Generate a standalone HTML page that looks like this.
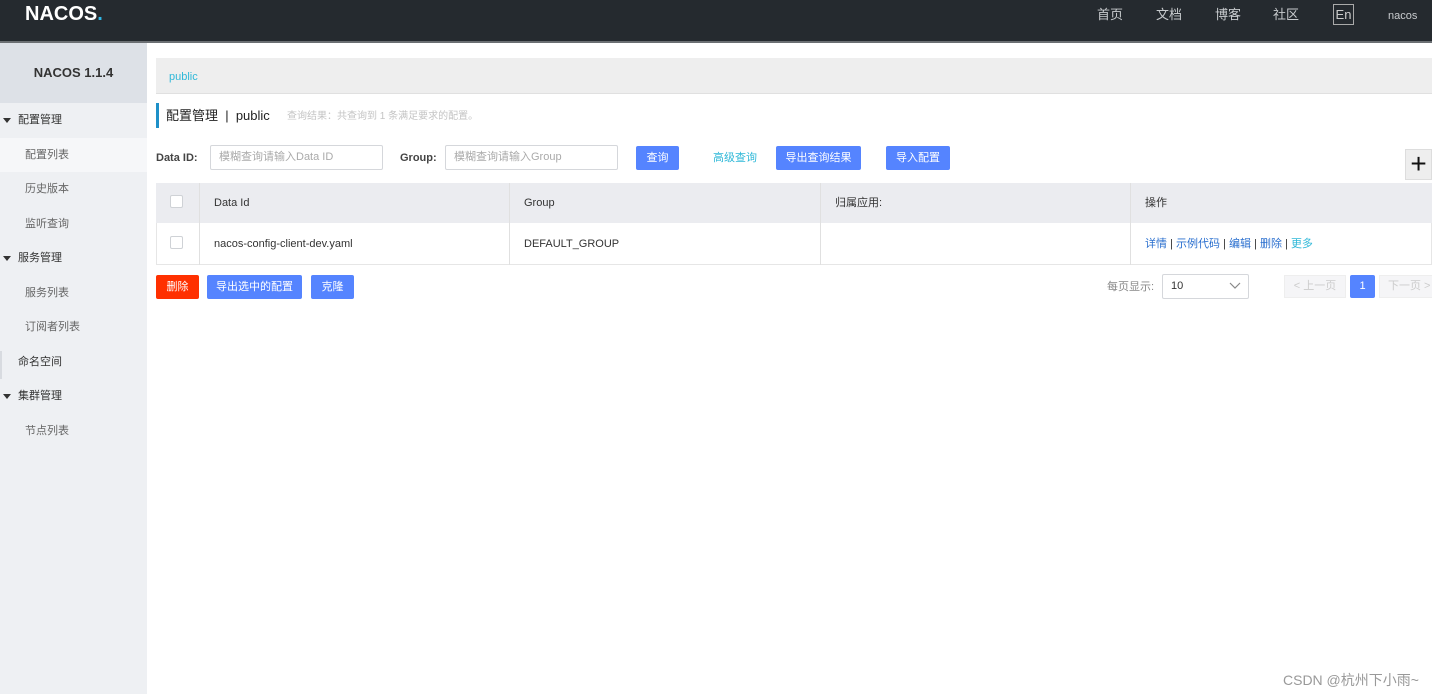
<!DOCTYPE html>
<html><head><meta charset="utf-8"><style>
*{box-sizing:border-box;margin:0;padding:0}
body{width:1432px;height:694px;overflow:hidden;font-family:"Liberation Sans","Noto Sans CJK SC",sans-serif;font-size:12px;color:#333;background:#fff;position:relative;line-height:14px}
.abs{position:absolute}
#hd{left:0;top:0;width:1432px;height:43px;background:#252a2f;border-bottom:2px solid #6b6f73}
#hd .nav{color:#c8cbce;font-size:13px;top:7px;line-height:16px}
#sb{left:0;top:43px;width:147px;height:651px;background:#eef0f3}
.si{position:absolute;left:0;width:147px;height:34px;line-height:34px;font-size:11px;color:#666;padding-left:25px}
.sg{padding-left:18px;color:#333}
.sg:before{content:"";position:absolute;left:3px;top:15px;border:4px solid transparent;border-top:5px solid #333}
.btn{position:absolute;height:24px;line-height:24px;color:#fff;background:#5584ff;border-radius:2px;font-size:11px;text-align:center}
.inp{position:absolute;height:25px;border:1px solid #d5d7db;border-radius:2px;font-size:11px;color:#aaa;line-height:23px;padding-left:8px}
.cell{position:absolute;font-size:11px;color:#333;line-height:14px;height:14px}
.cb{position:absolute;width:13px;height:13px;border:1px solid #cfd2d6;border-radius:2px;background:#fff}
</style></head><body>
<div id="hd" class="abs">
 <div class="abs" style="left:25px;top:3px;color:#fff;font-size:20px;line-height:22px;font-weight:bold">NACOS<span style="color:#2fb8e8">.</span></div>
 <div class="abs nav" style="left:1097px">首页</div>
 <div class="abs nav" style="left:1156px">文档</div>
 <div class="abs nav" style="left:1215px">博客</div>
 <div class="abs nav" style="left:1273px">社区</div>
 <div class="abs" style="left:1333px;top:4px;width:21px;height:21px;border:1px solid #aaa;color:#ccc;font-size:13px;text-align:center;line-height:19px">En</div>
 <div class="abs nav" style="left:1388px;top:8px;font-size:11px">nacos</div>
</div>
<div id="sb" class="abs">
 <div class="abs" style="left:0;top:0;width:147px;height:60px;background:#dde1e7;text-align:center;line-height:60px;font-weight:bold;font-size:13px;color:#333">NACOS 1.1.4</div>
 <div class="si sg" style="top:60px">配置管理</div>
 <div class="si" style="top:95px;background:#f6f7f9">配置列表</div>
 <div class="si" style="top:129px">历史版本</div>
 <div class="si" style="top:164px">监听查询</div>
 <div class="si sg" style="top:198px">服务管理</div>
 <div class="si" style="top:233px">服务列表</div>
 <div class="si" style="top:267px">订阅者列表</div>
 <div class="si" style="top:302px;padding-left:18px;color:#333">命名空间</div>
 <div class="abs" style="left:0;top:308px;width:2px;height:28px;background:#d8dbe0"></div>
 <div class="si sg" style="top:336px">集群管理</div>
 <div class="si" style="top:371px">节点列表</div>
</div>
<div class="abs" style="left:156px;top:58px;width:1276px;height:36px;background:#eeeeee;border-bottom:1px solid #e0e0e0"></div>
<div class="abs" style="left:169px;top:70px;color:#2fb8d8;font-size:11px">public</div>
<div class="abs" style="left:156px;top:103px;width:3px;height:25px;background:#1e90c8"></div>
<div class="abs" style="left:166px;top:108px;font-size:13px;color:#222;line-height:16px">配置管理 &nbsp;|&nbsp; public</div>
<div class="abs" style="left:287px;top:110px;font-size:10px;color:#c4c4c4">查询结果：共查询到 1 条满足要求的配置。</div>
<div class="abs" style="left:156px;top:151px;font-weight:bold;font-size:11px;color:#444">Data ID:</div>
<div class="inp" style="left:210px;top:145px;width:173px">模糊查询请输入Data ID</div>
<div class="abs" style="left:400px;top:151px;font-weight:bold;font-size:11px;color:#444">Group:</div>
<div class="inp" style="left:445px;top:145px;width:173px">模糊查询请输入Group</div>
<div class="btn" style="left:636px;top:146px;width:43px">查询</div>
<div class="abs" style="left:713px;top:151px;color:#2fb8d8;font-size:11px">高级查询</div>
<div class="btn" style="left:776px;top:146px;width:85px">导出查询结果</div>
<div class="btn" style="left:886px;top:146px;width:64px">导入配置</div>
<div class="abs" style="left:1405px;top:149px;width:27px;height:31px;background:#eeeeee;border:1px solid #ddd;font-size:28px;line-height:28px;text-align:center;color:#111">+</div>
<div class="abs" style="left:156px;top:183px;width:1276px;height:40px;background:#ebecf0"></div>
<div class="abs" style="left:156px;top:223px;width:1276px;height:42px;border:1px solid #e6e6e6;border-top:none"></div>
<div class="abs" style="left:199px;top:183px;width:1px;height:82px;background:#e0e0e0"></div>
<div class="abs" style="left:509px;top:183px;width:1px;height:82px;background:#e0e0e0"></div>
<div class="abs" style="left:820px;top:183px;width:1px;height:82px;background:#e0e0e0"></div>
<div class="abs" style="left:1130px;top:183px;width:1px;height:82px;background:#e0e0e0"></div>
<div class="cb" style="left:170px;top:195px"></div>
<div class="cb" style="left:170px;top:236px"></div>
<div class="cell" style="left:214px;top:196px">Data Id</div>
<div class="cell" style="left:524px;top:196px">Group</div>
<div class="cell" style="left:835px;top:196px">归属应用:</div>
<div class="cell" style="left:1145px;top:196px">操作</div>
<div class="cell" style="left:214px;top:237px">nacos-config-client-dev.yaml</div>
<div class="cell" style="left:524px;top:237px">DEFAULT_GROUP</div>
<div class="cell" style="left:1145px;top:237px;color:#2a6fcf">详情 <span style="color:#333">|</span> 示例代码 <span style="color:#333">|</span> 编辑 <span style="color:#333">|</span> 删除 <span style="color:#333">|</span> <span style="color:#2fb8d8">更多</span></div>
<div class="btn" style="left:156px;top:275px;width:43px;background:#ff3000">删除</div>
<div class="btn" style="left:207px;top:275px;width:95px">导出选中的配置</div>
<div class="btn" style="left:311px;top:275px;width:43px">克隆</div>
<div class="abs" style="left:1107px;top:280px;font-size:11px;color:#888">每页显示:</div>
<div class="abs" style="left:1162px;top:274px;width:87px;height:25px;border:1px solid #d5d7db;border-radius:2px;font-size:11px;line-height:23px;padding-left:8px">10<svg class="abs" style="left:66px;top:7px" width="12" height="8"><path d="M1 1 L6 6 L11 1" fill="none" stroke="#888" stroke-width="1.2"/></svg></div>
<div class="abs" style="left:1284px;top:275px;width:62px;height:23px;background:#f5f5f7;border:1px solid #eee;color:#ccc;font-size:11px;line-height:21px;text-align:center">&lt; 上一页</div>
<div class="abs" style="left:1350px;top:275px;width:25px;height:23px;background:#5584ff;color:#fff;border-radius:2px;font-size:11px;line-height:23px;text-align:center">1</div>
<div class="abs" style="left:1379px;top:275px;width:60px;height:23px;background:#f5f5f7;border:1px solid #eee;color:#ccc;font-size:11px;line-height:21px;padding-left:8px">下一页 &gt;</div>
<div class="abs" style="left:1283px;top:671px;font-size:14px;color:#999;line-height:18px">CSDN @杭州下小雨~</div>
</body></html>
